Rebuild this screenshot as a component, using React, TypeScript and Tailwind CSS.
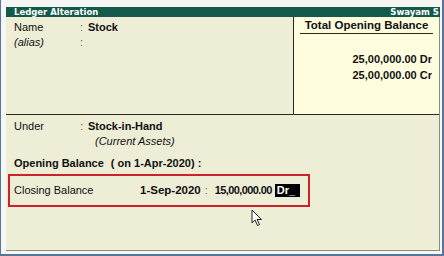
import React from 'react';

const font = { fontFamily: '"Liberation Sans", Arial, sans-serif' };
const titleFont = { fontFamily: '"DejaVu Sans", Verdana, sans-serif' };

function Cursor() {
    return (
        <svg className="absolute left-[250px] top-[209px]" width="12" height="18" viewBox="0 0 12 18">
            <path d="M1 1 L1 14 L4 11 L6.5 16.5 L8.5 15.5 L6 10.5 L10.5 10.5 Z" fill="#fff" stroke="#222" strokeWidth="1" strokeLinejoin="round" />
        </svg>
    );
}

export default function App() {
    return (
        <div className="relative w-[444px] h-[256px] bg-[#f6f7f4] border-l border-r-2 border-b-2 border-[#56769a] pl-[5px] pt-[7px] pr-[2px] pb-[3px] flex flex-col text-[#111]" style={font}>
            <div className="h-[10px] bg-[#135a4a] flex items-center justify-between pl-[8px] pr-[1px]" style={titleFont}>
                <span className="text-[8.5px] font-bold text-white leading-none">Ledger Alteration</span>
                <span className="text-[8.5px] font-bold text-white leading-none whitespace-nowrap">Swayam S</span>
            </div>

            <div className="flex-1 flex flex-col bg-[#eeedd6] border-r border-b border-[#8d8c7c]">
                <div className="h-[98px] flex border-b border-[#2a2a1e]">
                    <div className="flex-1 pl-[8px] pt-[3px] text-[11px] leading-[15px]">
                        <div className="flex">
                            <span className="w-[66px]">Name</span>
                            <span className="w-[8px] text-[#666]">:</span>
                            <span className="font-bold">Stock</span>
                        </div>
                        <div className="flex">
                            <span className="w-[66px] italic">(alias)</span>
                            <span className="w-[8px] text-[#666]">:</span>
                        </div>
                    </div>
                    <div className="w-[146px] bg-[#fefedf] border-l border-[#2a2a1e] px-[6px] pt-[1px]">
                        <div className="text-[11.5px] font-bold text-center leading-[14px] border-b border-[#2a2a1e] pb-[1px] whitespace-nowrap">Total Opening Balance</div>
                        <div className="mt-[17px] pr-[1px] text-[11px] font-bold text-right leading-[16px]">
                            <div>25,00,000.00 Dr</div>
                            <div>25,00,000.00 Cr</div>
                        </div>
                    </div>
                </div>

                <div className="flex-1 pl-[8px] pt-[4px] text-[11px] leading-[15px]">
                    <div className="flex">
                        <span className="w-[66px]">Under</span>
                        <span className="w-[8px] text-[#666]">:</span>
                        <span className="font-bold">Stock-in-Hand</span>
                    </div>
                    <div className="pl-[81px] italic">(Current Assets)</div>
                    <div className="mt-[7px] font-bold flex">
                        <span>Opening Balance</span>
                        <span className="ml-[7px]">( on 1-Apr-2020) :</span>
                    </div>
                    <div className="mt-[3px] -ml-[6px] w-[302px] h-[33px] border-2 border-[#cc2229] flex items-center pl-[4px]">
                        <span className="w-[126px]">Closing Balance</span>
                        <span className="font-bold text-[11.5px]">1-Sep-2020</span>
                        <span className="ml-[4px] w-[10px] text-[#666]">:</span>
                        <span className="font-bold text-[11px] tracking-[-0.6px]">15,00,000.00</span>
                        <span className="ml-[3px] bg-black text-white font-bold text-[11px] leading-[13px] px-[2px] w-[25px]">Dr_</span>
                    </div>
                </div>
            </div>
            <Cursor />
        </div>
    );
}
